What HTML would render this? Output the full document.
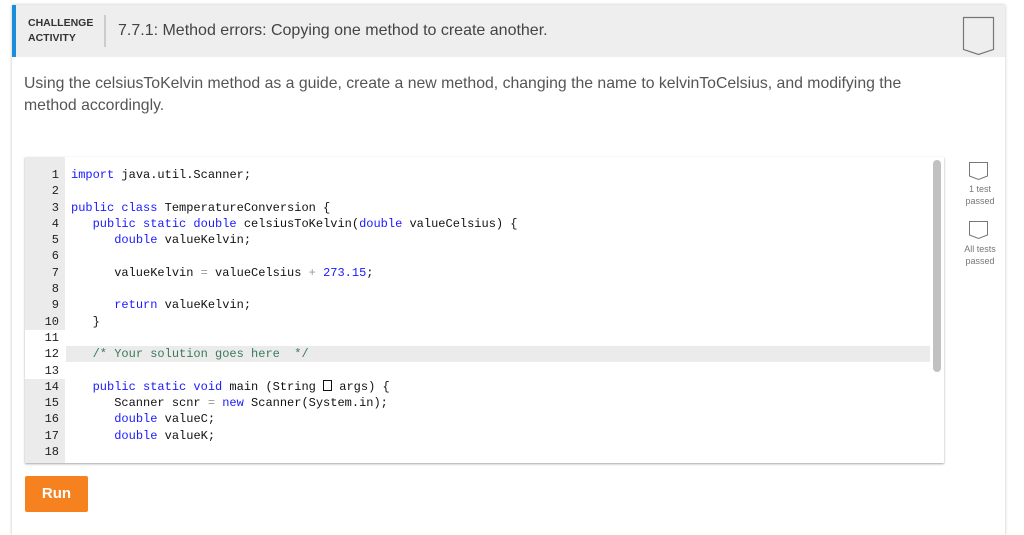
<!DOCTYPE html>
<html><head><style>
body{margin:0;width:1024px;height:524px;background:#fff;position:relative;overflow:hidden;font-family:"Liberation Sans",sans-serif}
.card{position:absolute;left:12px;top:5px;width:993px;height:530px;background:#fff;box-shadow:0 0 3px rgba(0,0,0,.25)}
.hdr{position:absolute;left:0;top:0;width:993px;height:52px;background:#eeeeee;border-left:4px solid #1a8ed8;box-sizing:border-box}
.lbl{position:absolute;left:12px;top:11px;font-size:10.5px;font-weight:bold;color:#333;line-height:15px}
.sep{position:absolute;left:88px;top:10px;width:2px;height:32px;background:#ccc}
.ttl{position:absolute;left:102px;top:17px;font-size:16px;color:#444}
.desc{position:absolute;left:12px;top:68px;font-size:15.8px;color:#555;line-height:22px;width:905px}
.ed{position:absolute;left:25px;top:157px;width:919px;height:306px;background:#fff;box-shadow:0 1px 2px rgba(0,0,0,.35);overflow:hidden}
.gut{position:absolute;left:0;top:0;width:40px;height:306px;background:#ebebeb}
.gw{position:absolute;left:0;top:173px;width:40px;height:49px;background:#fff}
.hl{position:absolute;left:41px;top:189px;width:864px;height:16px;background:#ebebeb}
.code{position:absolute;left:0;top:10px;font-family:"Liberation Mono",monospace;font-size:12px;line-height:16.3px;white-space:pre;color:#111}
.n{display:inline-block;width:34px;text-align:right;margin-right:12px;color:#222}
.k{color:#1a1aff}.c{color:#3a7a5a}.o{color:#999}
.sb{position:absolute;left:908px;top:3px;width:8px;height:212px;background:#c1c1c1;border-radius:4px}
.run{position:absolute;left:25px;top:476px;width:63px;height:36px;background:#f5821f;border-radius:2px;color:#fff;font-weight:bold;font-size:15px;text-align:center;line-height:36px}
.tst{position:absolute;font-size:9px;color:#777;text-align:center;width:40px;line-height:12px}
</style></head><body>
<div class="card">
<div class="hdr">
<div class="lbl">CHALLENGE<br>ACTIVITY</div>
<div class="sep"></div>
<div class="ttl">7.7.1: Method errors: Copying one method to create another.</div>
</div>
<svg style="position:absolute;left:950px;top:8px" width="34" height="44"><path d="M1.5 4.5H31.5V36.5L16.5 41.5L1.5 36.5Z" fill="none" stroke="#777" stroke-width="1.2"/></svg>
<div class="desc">Using the celsiusToKelvin method as a guide, create a new method, changing the name to kelvinToCelsius, and modifying the method accordingly.</div>
<svg style="position:absolute;left:956px;top:151px" width="22" height="26"><path d="M1.5 6.5H19.5V20L10.5 23.5L1.5 20Z" fill="none" stroke="#777"/></svg>
<div class="tst" style="left:948px;top:178px">1 test<br>passed</div>
<svg style="position:absolute;left:956px;top:211px" width="22" height="26"><path d="M1.5 5.5H19.5V19L10.5 22.5L1.5 19Z" fill="none" stroke="#777"/></svg>
<div class="tst" style="left:948px;top:238px">All tests<br>passed</div>
</div>
<div class="ed">
<div class="gut"></div><div class="gw"></div><div class="hl"></div>
<div class="code"><span class="n">1</span><span class="k">import</span> java.util.Scanner;
<span class="n">2</span>
<span class="n">3</span><span class="k">public class</span> TemperatureConversion {
<span class="n">4</span>   <span class="k">public static double</span> celsiusToKelvin(<span class="k">double</span> valueCelsius) {
<span class="n">5</span>      <span class="k">double</span> valueKelvin;
<span class="n">6</span>
<span class="n">7</span>      valueKelvin <span class="o">=</span> valueCelsius <span class="o">+</span> <span class="k">273.15</span>;
<span class="n">8</span>
<span class="n">9</span>      <span class="k">return</span> valueKelvin;
<span class="n">10</span>   }
<span class="n">11</span>
<span class="n">12</span>   <span class="c">/* Your solution goes here  */</span>
<span class="n">13</span>
<span class="n">14</span>   <span class="k">public static void</span> main (String <span style="display:inline-block;width:9px;height:11px;border:1px solid #111;box-sizing:border-box;vertical-align:-1px"></span> args) {
<span class="n">15</span>      Scanner scnr <span class="o">=</span> <span class="k">new</span> Scanner(System.in);
<span class="n">16</span>      <span class="k">double</span> valueC;
<span class="n">17</span>      <span class="k">double</span> valueK;
<span class="n">18</span></div>
<div class="sb"></div>
</div>
<div class="run">Run</div>
</body></html>
